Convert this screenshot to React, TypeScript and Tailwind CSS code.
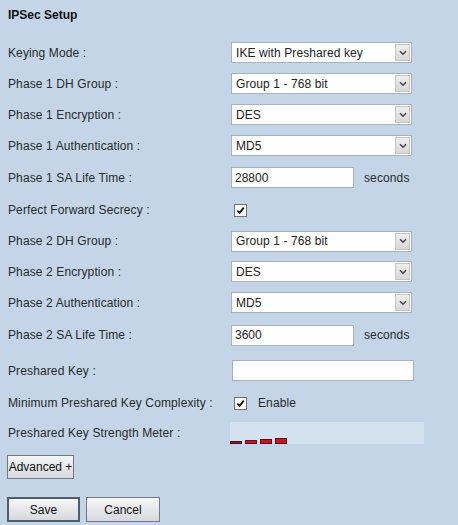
const font = { fontFamily: '"Liberation Sans", Arial, sans-serif' }

const Chevron = () => (
  <svg viewBox="0 0 8 6" className="h-[6px] w-[8px]" aria-hidden="true">
    <path d="M1 1.2 L4 4.2 L7 1.2" fill="none" stroke="#4a4a4a" strokeWidth="1.6" />
  </svg>
)

const Select = ({ value }: { value: string }) => (
  <div className="flex h-[21px] w-[181px] items-stretch border border-[#a9b1ba] bg-white">
    <span className="flex flex-1 items-center pl-[4px] text-[12px] tracking-[0.1px] text-[#222]">{value}</span>
    <span className="m-[1px] flex w-[15px] items-center justify-center border border-[#c4c4c4] bg-gradient-to-b from-[#eeeeee] to-[#d8d8d8]">
      <Chevron />
    </span>
  </div>
)

const TextBox = ({ value, width }: { value: string; width: string }) => (
  <div className={`flex h-[21px] items-center border border-[#a9b1ba] bg-white pl-[3px] text-[12px] text-[#222] ${width}`}>
    {value}
  </div>
)

const Check = () => (
  <span className="flex h-[13px] w-[13px] items-center justify-center border border-[#707070] bg-white">
    <svg viewBox="0 0 10 10" className="h-[9px] w-[9px]" aria-hidden="true">
      <path d="M1.5 5 L4 7.6 L8.6 1.8" fill="none" stroke="#111" strokeWidth="2" />
    </svg>
  </span>
)

const Row = ({ label, h, children }: { label: string; h: string; children?: React.ReactNode }) => (
  <div className={`flex items-center ${h}`}>
    <span className="w-[223px] shrink-0 text-[12px] tracking-[0.12px] text-[#2a2a2a]">{label}</span>
    <div className="flex items-center">{children}</div>
  </div>
)

const Button = ({ label, width, primary }: { label: string; width: string; primary?: boolean }) => (
  <button
    className={`flex h-[25px] items-center justify-center bg-gradient-to-b from-[#f6f6f6] to-[#d6d9dd] text-[12px] text-[#111] ${width} ${
      primary ? 'border-2 border-[#4f5d6b]' : 'border border-[#707a85]'
    }`}
  >
    {label}
  </button>
)

const App = () => {
  return (
    <div className="h-[525px] w-[458px] bg-[#c3d5e6] pl-[8px] pt-[7px]" style={font}>
      <h1 className="mb-[14px] h-[16px] text-[12px] font-bold leading-[16px] text-[#111]">IPSec Setup</h1>

      <Row label="Keying Mode :" h="h-[31px]">
        <Select value="IKE with Preshared key" />
      </Row>
      <Row label="Phase 1 DH Group :" h="h-[31px]">
        <Select value="Group 1 - 768 bit" />
      </Row>
      <Row label="Phase 1 Encryption :" h="h-[31px]">
        <Select value="DES" />
      </Row>
      <Row label="Phase 1 Authentication :" h="h-[31px]">
        <Select value="MD5" />
      </Row>
      <Row label="Phase 1 SA Life Time :" h="h-[33px]">
        <TextBox value="28800" width="w-[123px]" />
        <span className="ml-[10px] text-[12px] tracking-[0.12px] text-[#2a2a2a]">seconds</span>
      </Row>
      <Row label="Perfect Forward Secrecy :" h="h-[32px]">
        <span className="ml-[3px]">
          <Check />
        </span>
      </Row>
      <Row label="Phase 2 DH Group :" h="h-[30px]">
        <Select value="Group 1 - 768 bit" />
      </Row>
      <Row label="Phase 2 Encryption :" h="h-[31px]">
        <Select value="DES" />
      </Row>
      <Row label="Phase 2 Authentication :" h="h-[31px]">
        <Select value="MD5" />
      </Row>
      <Row label="Phase 2 SA Life Time :" h="h-[34px]">
        <TextBox value="3600" width="w-[123px]" />
        <span className="ml-[10px] text-[12px] tracking-[0.12px] text-[#2a2a2a]">seconds</span>
      </Row>
      <Row label="Preshared Key :" h="h-[37px]">
        <TextBox value="" width="ml-[1px] w-[182px]" />
      </Row>
      <Row label="Minimum Preshared Key Complexity :" h="h-[28px]">
        <span className="ml-[3px]">
          <Check />
        </span>
        <span className="ml-[11px] text-[12px] tracking-[0.12px] text-[#2a2a2a]">Enable</span>
      </Row>
      <div className="flex h-[32px] items-center">
        <span className="w-[222px] shrink-0 text-[12px] tracking-[0.12px] text-[#2a2a2a]">Preshared Key Strength Meter :</span>
        <div className="flex h-[22px] w-[194px] items-end gap-[3px] bg-[#d4e1ee]">
          <span className="h-[3px] w-[12px] border border-[#4a1018] bg-[#8c1a2a]" />
          <span className="h-[4px] w-[12px] border border-[#5a1018] bg-[#cc1122]" />
          <span className="h-[5px] w-[12px] border border-[#5a1018] bg-[#cc1122]" />
          <span className="h-[6px] w-[12px] border border-[#5a1018] bg-[#cc1122]" />
        </div>
      </div>
      <div className="flex h-[36px] items-center">
        <button className="-ml-[1px] flex h-[24px] w-[67px] items-center justify-center border border-[#707a85] bg-gradient-to-b from-[#f6f6f6] to-[#d6d9dd] text-[12px] text-[#111]">
          Advanced +
        </button>
      </div>
      <div className="-ml-[1px] mt-[12px] flex gap-[6px]">
        <Button label="Save" width="w-[73px]" primary />
        <Button label="Cancel" width="w-[74px]" />
      </div>
    </div>
  )
}

export default App
